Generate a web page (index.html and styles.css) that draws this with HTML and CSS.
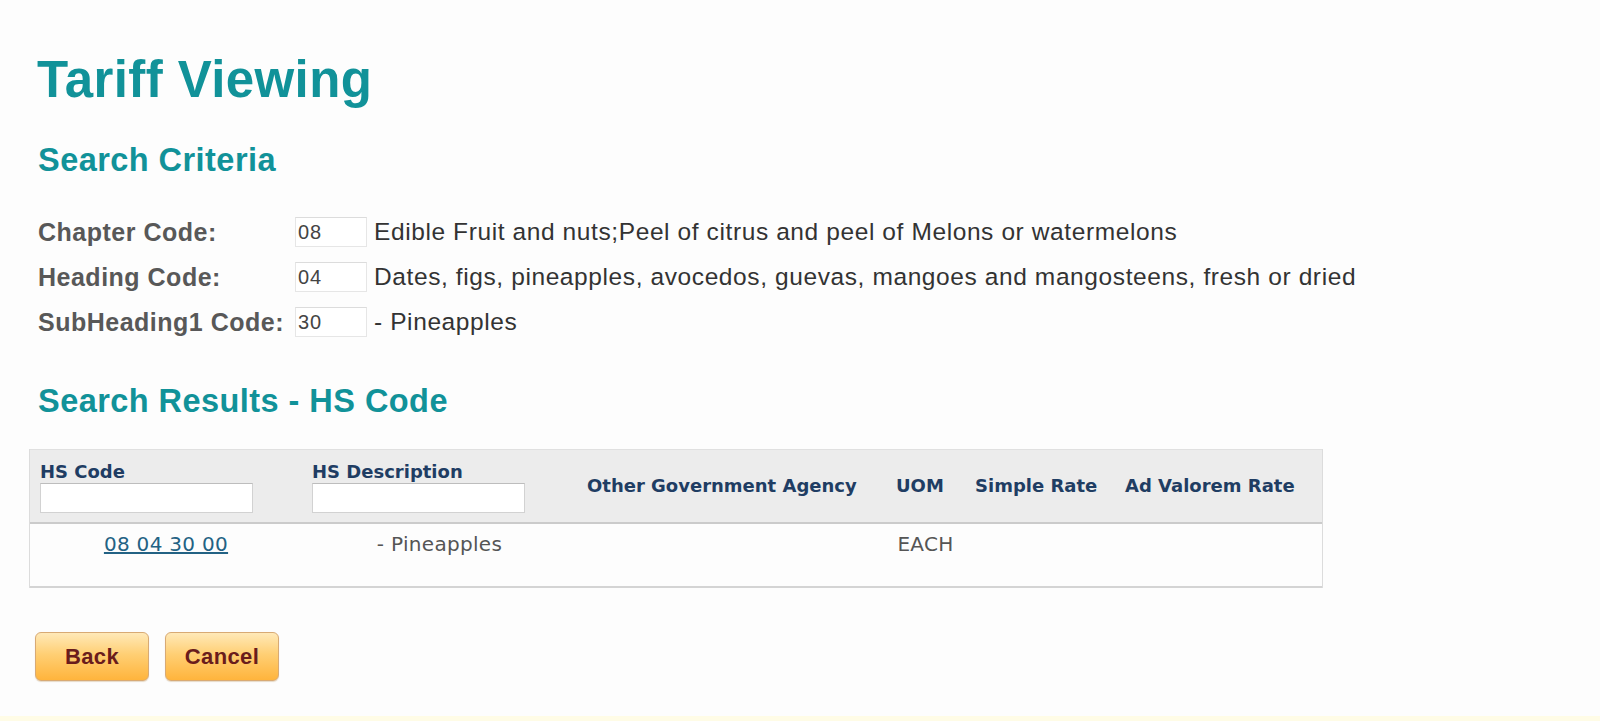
FILE: index.html
```html
<!DOCTYPE html>
<html lang="en">
<head>
<meta charset="utf-8">
<title>Tariff Viewing</title>
<link rel="stylesheet" href="styles.css">
</head>
<body>
<div class="page">
  <h1 class="title">Tariff Viewing</h1>
  <h2 class="section criteria-title">Search Criteria</h2>
  <div class="criteria">
    <div class="label">Chapter Code:</div>
    <input class="code-input" type="text" value="08" readonly>
    <div class="desc">Edible Fruit and nuts;Peel of citrus and peel of Melons or watermelons</div>

    <div class="label">Heading Code:</div>
    <input class="code-input" type="text" value="04" readonly>
    <div class="desc">Dates, figs, pineapples, avocedos, guevas, mangoes and mangosteens, fresh or dried</div>

    <div class="label">SubHeading1 Code:</div>
    <input class="code-input" type="text" value="30" readonly>
    <div class="desc">- Pineapples</div>
  </div>

  <h2 class="section results-title">Search Results - HS Code</h2>

  <table class="results">
    <colgroup>
      <col class="c1"><col class="c2"><col class="c3"><col class="c4"><col class="c5"><col class="c6">
    </colgroup>
    <thead>
      <tr>
        <th class="filter-th"><div class="th-label">HS Code</div><input class="filter" type="text"></th>
        <th class="filter-th"><div class="th-label">HS Description</div><input class="filter" type="text"></th>
        <th>Other Government Agency</th>
        <th>UOM</th>
        <th>Simple Rate</th>
        <th>Ad Valorem Rate</th>
      </tr>
    </thead>
    <tbody>
      <tr>
        <td><a href="#" class="code-link">08 04 30 00</a></td>
        <td>- Pineapples</td>
        <td></td>
        <td>EACH</td>
        <td></td>
        <td></td>
      </tr>
    </tbody>
  </table>

  <div class="buttons">
    <button class="btn" type="button">Back</button>
    <button class="btn" type="button">Cancel</button>
  </div>
</div>
<div class="footer-strip"></div>
</body>
</html>
```

FILE: styles.css
```css
html, body {
  margin: 0;
  padding: 0;
}
body {
  background: #fdfdfd;
  font-family: "Liberation Sans", Arial, sans-serif;
  color: #333;
}
.page {
  padding: 50px 0 0 29px;
}
.title {
  margin: 0 0 0 8px;
  font-size: 51px;
  line-height: 60px;
  font-weight: bold;
  letter-spacing: 0.4px;
  color: #119299;
}
.section {
  margin: 0 0 0 9px;
  font-size: 32.5px;
  line-height: 38px;
  font-weight: bold;
  letter-spacing: 0.45px;
  color: #119299;
}
.criteria-title {
  margin-top: 31px;
}
.criteria {
  margin: 38px 0 0 9px;
  display: grid;
  grid-template-columns: 257px 72px auto;
  grid-auto-rows: 30px;
  row-gap: 15px;
  align-items: center;
}
.label {
  font-size: 25px;
  line-height: 30px;
  font-weight: bold;
  letter-spacing: 0.5px;
  color: #585858;
  white-space: nowrap;
}
.code-input {
  box-sizing: border-box;
  width: 72px;
  height: 30px;
  margin: 0;
  padding: 0 0 0 2px;
  border: 1px solid #e6e6e6;
  border-top-color: #dcdcdc;
  background: #fff;
  font-family: "Liberation Sans", Arial, sans-serif;
  font-size: 20px;
  letter-spacing: 1px;
  color: #444;
  outline: none;
}
.desc {
  padding-left: 7px;
  font-size: 24.5px;
  line-height: 30px;
  letter-spacing: 0.6px;
  color: #333;
  white-space: nowrap;
}
.results-title {
  margin-top: 45px;
}
.results {
  margin-top: 29px;
  width: 1294px;
  table-layout: fixed;
  border-collapse: separate;
  border-spacing: 0;
  border-left: 1px solid #dcdcdc;
  border-right: 1px solid #dcdcdc;
  font-family: "DejaVu Sans", Verdana, sans-serif;
}
.c1 { width: 272px; }
.c2 { width: 275px; }
.c3 { width: 309px; }
.c4 { width: 79px; }
.c5 { width: 150px; }
.c6 { width: 207px; }
.results th {
  background: #ececec;
  border-top: 1px solid #e0e0e0;
  border-bottom: 2px solid #cbcbcb;
  padding: 0 10px;
  text-align: left;
  vertical-align: middle;
  font-size: 18px;
  line-height: 22px;
  font-weight: bold;
  color: #1f3d63;
  white-space: nowrap;
}
.results th.filter-th {
  vertical-align: top;
  padding-top: 11px;
  padding-bottom: 9px;
}
.th-label {
  line-height: 22px;
}
.filter {
  display: block;
  box-sizing: border-box;
  width: 213px;
  height: 30px;
  margin: 0;
  padding: 0 4px;
  border: 1px solid #d2d2d2;
  border-top-color: #bdbdbd;
  background: #fff;
  outline: none;
}
.results td {
  background: #fdfdfd;
  border-bottom: 2px solid #d4d4d4;
  padding: 8px 10px 30px;
  text-align: center;
  vertical-align: top;
  font-size: 20px;
  line-height: 24px;
  letter-spacing: 0.3px;
  color: #555;
  white-space: nowrap;
}
.code-link {
  color: #236284;
  text-decoration: underline;
}
.buttons {
  margin: 44px 0 0 6px;
  display: flex;
  gap: 16px;
}
.btn {
  box-sizing: border-box;
  width: 114px;
  height: 49px;
  margin: 0;
  padding: 0;
  border: 1px solid #d8aa74;
  border-radius: 6px;
  background: linear-gradient(to bottom, #ffe9b8 0%, #ffcf74 45%, #ffb43c 100%);
  box-shadow: 0 1px 1px rgba(160, 110, 40, 0.25);
  font-family: "Liberation Sans", Arial, sans-serif;
  font-size: 22px;
  font-weight: bold;
  letter-spacing: 0.4px;
  color: #6a1c1c;
  cursor: pointer;
}
.footer-strip {
  margin-top: 35px;
  height: 5px;
  background: #fffce6;
}
```
